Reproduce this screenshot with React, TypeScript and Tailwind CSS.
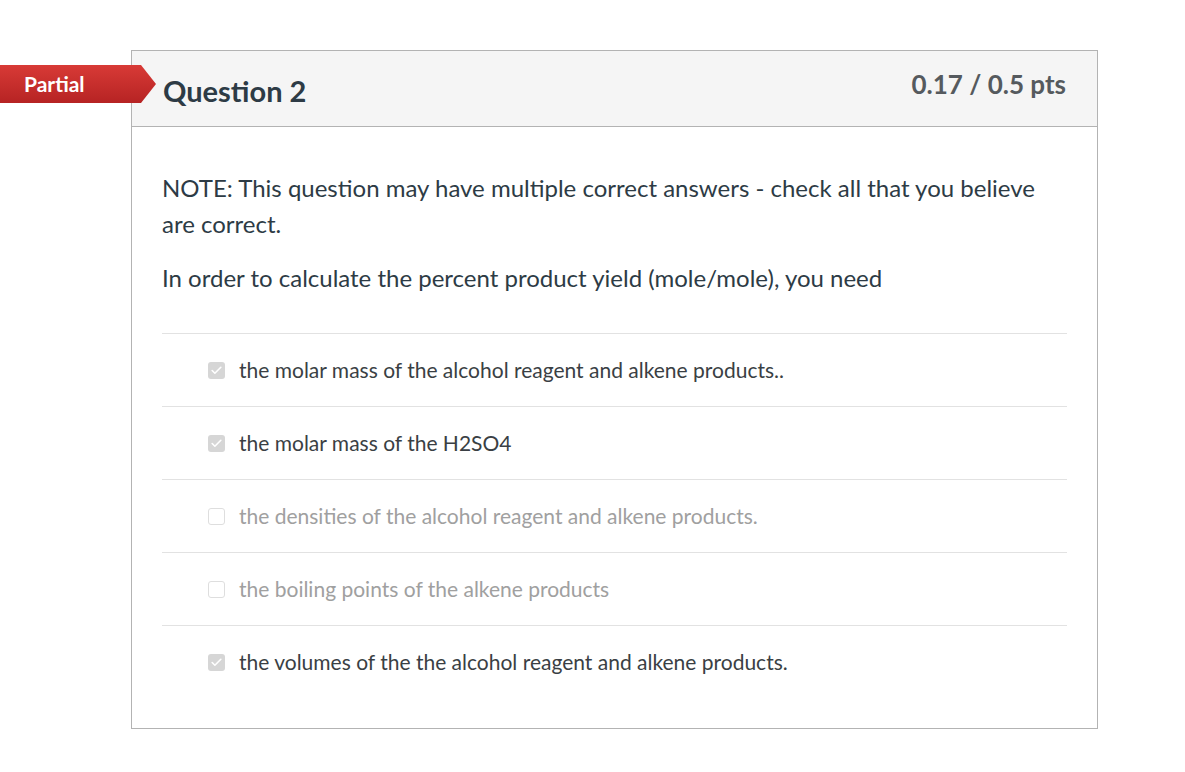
import { Check } from "lucide-react";

interface Answer {
  text: string;
  checked: boolean;
}

const answers: Answer[] = [
  { text: "the molar mass of the alcohol reagent and alkene products..", checked: true },
  { text: "the molar mass of the H2SO4", checked: true },
  { text: "the densities of the alcohol reagent and alkene products.", checked: false },
  { text: "the boiling points of the alkene products", checked: false },
  { text: "the volumes of the the alcohol reagent and alkene products.", checked: true },
];

function AnswerRow({ answer }: { answer: Answer }) {
  return (
    <div className="flex items-center h-[73px] border-t border-[#e2e2e2] pl-[46px]">
      {answer.checked ? (
        <div className="w-[17px] h-[17px] rounded-[3px] bg-[#d6d6d6] flex items-center justify-center">
          <Check size={13} strokeWidth={3} className="text-white" />
        </div>
      ) : (
        <div className="w-[17px] h-[17px] rounded-[3px] border border-[#dedede] bg-white" />
      )}
      <span
        className={`ml-[14px] text-[21px] ${
          answer.checked ? "text-[#3a3f44]" : "text-[#a0a0a0]"
        }`}
      >
        {answer.text}
      </span>
    </div>
  );
}

export default function App() {
  return (
    <div className="relative min-h-[772px] bg-white pt-[50px] font-['Lato','Noto_Sans',sans-serif]">
      <div className="ml-[131px] w-[967px] border border-[#b3b3b3]">
        <div className="flex justify-between h-[76px] bg-[#f5f5f5] border-b border-[#b3b3b3] px-[31px]">
          <h2 className="mt-[22px] text-[29px] leading-[35px] font-bold text-[#2d3b45]">Question 2</h2>
          <div className="mt-[17px] text-[26px] leading-[32px] font-bold text-[#555a5e]">0.17 / 0.5 pts</div>
        </div>
        <div className="px-[30px] pt-[43px] pb-[30px] text-[#2d3b45]">
          <p className="text-[24px] leading-[36px]">
            NOTE: This question may have multiple correct answers - check all that you believe are correct.
          </p>
          <p className="mt-[18px] text-[24px] leading-[36px]">
            In order to calculate the percent product yield (mole/mole), you need
          </p>
          <div className="mt-[37px]">
            {answers.map((a, i) => (
              <AnswerRow key={i} answer={a} />
            ))}
          </div>
        </div>
      </div>

      {/* status ribbon */}
      <div className="absolute left-0 top-[65px] flex h-[38px]">
        <div className="w-[141px] bg-gradient-to-b from-[#d83a36] to-[#b62323] flex items-center pl-[24px] pb-[1px] text-white font-bold text-[21px]">
          Partial
        </div>
        <svg width="15" height="38" viewBox="0 0 15 38">
          <defs>
            <linearGradient id="rib" x1="0" y1="0" x2="0" y2="1">
              <stop offset="0" stopColor="#d83a36" />
              <stop offset="1" stopColor="#b62323" />
            </linearGradient>
          </defs>
          <polygon points="0,0 15,19 0,38" fill="url(#rib)" />
        </svg>
      </div>
    </div>
  );
}
